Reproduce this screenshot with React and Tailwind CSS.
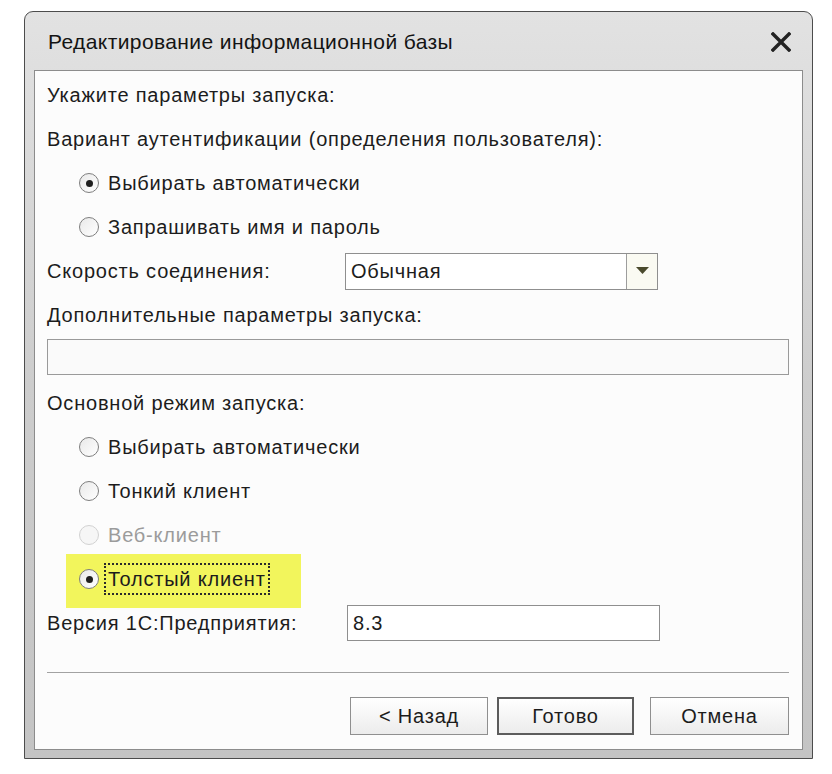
const font = { fontFamily: '"Liberation Sans", Arial, sans-serif' };

const Radio = ({ checked, disabled, children, focused }) => (
  <div className="h-[44px] flex items-center pl-[32px] relative">
    {focused && (
      <div className="absolute left-[19px] top-[-3px] w-[235px] h-[54px] bg-[#f2f55c]" />
    )}
    <div
      className={`relative w-[20px] h-[20px] rounded-full border-[1.5px] flex items-center justify-center shrink-0 ${
        disabled ? 'border-[#d2d2d2] bg-[#f6f6f6]' : 'border-[#7e7e7e] bg-gradient-to-br from-[#e9e9e9] to-white'
      }`}
    >
      {checked && <div className="w-[7px] h-[7px] rounded-full bg-[#1f1f1f]" />}
    </div>
    <span
      className={`relative ml-[7px] px-[2px] leading-[28px] ${
        disabled ? 'text-[#9b9b9b]' : 'text-[#1c1c1c]'
      } ${focused ? 'outline-dotted outline-2 outline-[#2a2a2a] outline-offset-0' : ''}`}
    >
      {children}
    </span>
  </div>
);

const Label = ({ children }) => (
  <div className="h-[44px] flex items-center text-[#1c1c1c]">{children}</div>
);

const Button = ({ children, primary, className = '' }) => (
  <div
    className={`h-[38px] flex items-center justify-center text-[#1c1c1c] bg-gradient-to-b from-white to-[#ececec] ${
      primary ? 'border-[2px] border-[#5c5c5c]' : 'border border-[#8f8f8f]'
    } ${className}`}
  >
    {children}
  </div>
);

export default function App() {
  return (
    <div className="w-[832px] h-[774px] bg-white pt-[11px] pl-[24px]" style={font}>
      <div className="w-[789px] h-[748px] border border-[#4c4c4c] rounded-t-[9px] bg-gradient-to-b from-[#e2e2e2] via-[#cdcdcd] to-[#c4c4c4] flex flex-col">
        {/* Title bar */}
        <div className="h-[58px] flex items-center justify-between pl-[23px] pr-[21px] text-[21px] tracking-[0.4px] text-[#141414]">
          <span className="pt-[1px]">Редактирование информационной базы</span>
          <svg width="20" height="20" viewBox="0 0 20 20" className="mt-[2px]">
            <path d="M2 2 L18 18 M18 2 L2 18" stroke="#222" strokeWidth="3.4" strokeLinecap="square" />
          </svg>
        </div>

        {/* Client area */}
        <div className="flex-1 mx-[9px] mb-[8px] border border-[#8c8c8c] bg-[#fcfcfc] pl-[12px] pr-[13px] pt-[2px] text-[20px] tracking-[0.8px]">
          <Label>Укажите параметры запуска:</Label>
          <Label>Вариант аутентификации (определения пользователя):</Label>
          <Radio checked>Выбирать автоматически</Radio>
          <Radio>Запрашивать имя и пароль</Radio>

          <div className="h-[44px] flex items-center text-[#1c1c1c]">
            <span className="w-[298px]">Скорость соединения:</span>
            <div className="w-[313px] h-[37px] border border-[#8f8f8f] bg-white flex">
              <span className="flex-1 flex items-center pl-[5px]">Обычная</span>
              <div className="w-[31px] border-l border-[#9d9d9d] bg-[#fafaf2] flex items-center justify-center">
                <svg width="13" height="8" viewBox="0 0 13 8">
                  <path d="M0 0 H13 L6.5 7 Z" fill="#4a4a2c" />
                </svg>
              </div>
            </div>
          </div>

          <Label>Дополнительные параметры запуска:</Label>
          <div className="h-[44px] pt-[2px]">
            <div className="h-[36px] border border-[#9a9a9a] bg-[#fafafa]" />
          </div>

          <Label>Основной режим запуска:</Label>
          <Radio>Выбирать автоматически</Radio>
          <Radio>Тонкий клиент</Radio>
          <Radio disabled>Веб-клиент</Radio>
          <Radio checked focused>Толстый клиент</Radio>

          <div className="h-[44px] flex items-center text-[#1c1c1c]">
            <span className="w-[300px]">Версия 1С:Предприятия:</span>
            <div className="w-[313px] h-[36px] border border-[#8f8f8f] bg-white flex items-center pl-[5px]">8.3</div>
          </div>

          <div className="mt-[27px] h-px bg-[#a2a2a2]" />

          <div className="mt-[24px] flex justify-end">
            <Button className="w-[138px]">&lt; Назад</Button>
            <Button primary className="w-[137px] ml-[9px]">Готово</Button>
            <Button className="w-[139px] ml-[16px]">Отмена</Button>
          </div>
        </div>
      </div>
    </div>
  );
}
